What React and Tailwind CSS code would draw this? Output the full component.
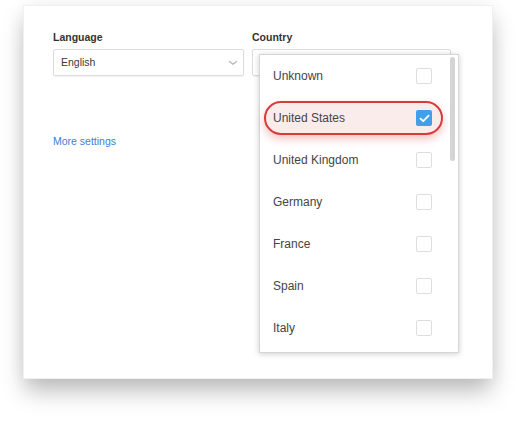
import React from 'react';

const countries = ['Unknown', 'United States', 'United Kingdom', 'Germany', 'France', 'Spain', 'Italy'];

const Checkbox = ({ checked }) =>
  checked ? (
    <span className="w-[16px] h-[16px] rounded-[2px] bg-[#40a0ec] flex items-center justify-center">
      <svg width="11" height="9" viewBox="0 0 11 9" fill="none">
        <path d="M1.5 4.6 L4.2 7.2 L9.6 1.6" stroke="#fff" strokeWidth="1.8" strokeLinecap="round" strokeLinejoin="round" />
      </svg>
    </span>
  ) : (
    <span className="w-[16px] h-[16px] rounded-[2px] border border-[#dedede] bg-white" />
  );

const App = () => {
  return (
    <div className="w-[516px] h-[421px] bg-white pt-[5px] pl-[23px] font-['Liberation_Sans',Arial,sans-serif]">
      <div className="relative w-[470px] h-[374px] bg-white border border-[#eef1f4] shadow-[0_14px_22px_-2px_rgba(0,0,0,0.26),0_0_18px_rgba(0,0,0,0.05)] pt-[24px] pl-[29px]">
        <div className="flex gap-[8px]">
          {/* Language */}
          <div className="w-[191px]">
            <div className="text-[10.5px] leading-[14px] font-bold text-[#333] mb-[5px]">Language</div>
            <div className="h-[27px] border border-[#dcdcdc] rounded-[2px] shadow-[0_1px_2px_rgba(0,0,0,0.06)] flex items-center justify-between pl-[7px] pr-[5px]">
              <span className="text-[10.5px] text-[#3a3a3a]">English</span>
              <svg width="10" height="6" viewBox="0 0 10 6" fill="none">
                <path d="M1.5 1.5 L5 4.3 L8.5 1.5" stroke="#b4b4b4" strokeWidth="1.2" strokeLinecap="round" strokeLinejoin="round" />
              </svg>
            </div>
          </div>
          {/* Country */}
          <div className="w-[199px]">
            <div className="text-[10.5px] leading-[14px] font-bold text-[#333] mb-[5px]">Country</div>
            <div className="h-[27px] border border-[#dcdcdc] rounded-[2px] shadow-[0_1px_2px_rgba(0,0,0,0.06)]" />
          </div>
        </div>

        <div className="mt-[58px] text-[10.5px] text-[#3b7fd4]">More settings</div>

        {/* Country dropdown */}
        <div className="absolute left-[235px] top-[48px] w-[200px] h-[299px] bg-white border border-[#d6d6d6] shadow-[0_1px_6px_rgba(0,0,0,0.2)]">
          <div className="absolute right-[3px] top-[2px] w-[5px] h-[104px] rounded-full bg-[#d4d4d4]" />
          {countries.map((c) => {
            const on = c === 'United States';
            return (
              <div key={c} className="h-[42px] flex items-center pl-[4px] pr-[15px]">
                <div
                  className={
                    on
                      ? 'flex-1 h-[34px] flex items-center justify-between pl-[7px] pr-[9px] rounded-full border-2 border-[#d93b3b] bg-[#fbecec] shadow-[0_4px_8px_rgba(220,60,60,0.3)]'
                      : 'flex-1 h-[34px] flex items-center justify-between pl-[9px] pr-[11px]'
                  }
                >
                  <span className="text-[12px] text-[#444]">{c}</span>
                  <Checkbox checked={on} />
                </div>
              </div>
            );
          })}
        </div>
      </div>
    </div>
  );
};

export default App;
